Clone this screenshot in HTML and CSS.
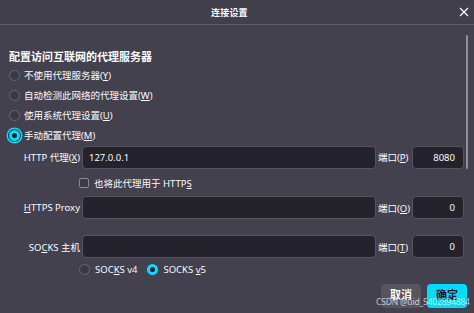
FILE: index.html
```html
<!DOCTYPE html>
<html lang="zh-CN">
<head>
<meta charset="utf-8">
<title>连接设置</title>
<link rel="stylesheet" href="styles.css">
</head>
<body>
<div class="dialog">
  <header class="titlebar">
    <span class="title">连接设置</span>
    <svg class="close" width="10" height="10" viewBox="0 0 10 10" aria-hidden="true">
      <path d="M1 1 L9 9 M9 1 L1 9" stroke="#fbfbfe" stroke-width="1.2" fill="none"/>
    </svg>
  </header>
  <main class="content">
    <h1 class="heading">配置访问互联网的代理服务器</h1>
    <div class="radio-list">
      <div class="option"><span class="radio"></span><span>不使用代理服务器(<u>Y</u>)</span></div>
      <div class="option"><span class="radio"></span><span>自动检测此网络的代理设置(<u>W</u>)</span></div>
      <div class="option"><span class="radio"></span><span>使用系统代理设置(<u>U</u>)</span></div>
      <div class="option"><span class="radio checked focused"></span><span>手动配置代理(<u>M</u>)</span></div>
    </div>
    <div class="proxy-grid">
      <span class="lbl">HTTP 代理(<u>X</u>)</span>
      <div class="field">127.0.0.1</div>
      <span class="plbl">端口(<u>P</u>)</span>
      <div class="field port">8080</div>

      <div class="sub-row"><span class="checkbox"></span><span>也将此代理用于 HTTP<u>S</u></span></div>

      <span class="lbl"><u>H</u>TTPS Proxy</span>
      <div class="field"></div>
      <span class="plbl">端口(<u>O</u>)</span>
      <div class="field port">0</div>

      <div class="spacer"></div>

      <span class="lbl">SO<u>C</u>KS 主机</span>
      <div class="field"></div>
      <span class="plbl">端口(<u>T</u>)</span>
      <div class="field port">0</div>

      <div class="sub-row">
        <span class="radio"></span><span>SOC<u>K</u>S v4</span>
        <span class="radio checked second"></span><span>SOCKS <u>v</u>5</span>
      </div>
    </div>
    <div class="buttons">
      <button class="btn cancel">取消</button>
      <button class="btn primary">确定</button>
    </div>
  </main>
  <div class="scrollbar"></div>
  <div class="watermark">CSDN @uid_5402894884</div>
</div>
</body>
</html>
```

FILE: styles.css
```css
html, body {
  margin: 0;
  padding: 0;
}

body {
  width: 474px;
  height: 313px;
  overflow: hidden;
  background: #42414d;
  color: #fbfbfe;
  font-family: "Noto Sans", "Noto Sans CJK SC", sans-serif;
  font-size: 9.5px;
}

u {
  text-decoration: underline;
  text-underline-offset: 1px;
  text-decoration-thickness: 1px;
}

.dialog {
  position: relative;
  height: 313px;
}

.titlebar {
  height: 24px;
  border-bottom: 1px solid #5d5c68;
  display: flex;
  align-items: center;
  padding-left: 211px;
  padding-right: 5px;
  background: #403f4b;
}

.title {
  font-size: 9px;
  font-weight: 700;
  letter-spacing: 0.2px;
}

.close {
  margin-left: auto;
}

.content {
  padding-top: 23px;
}

.heading {
  margin: 0 0 0 9px;
  height: 17px;
  line-height: 17px;
  font-size: 11px;
  font-weight: 700;
}

.option {
  display: flex;
  align-items: center;
  height: 20px;
  padding-left: 9px;
  gap: 4px;
}

.radio {
  flex: none;
  width: 11px;
  height: 11px;
  box-sizing: border-box;
  border-radius: 50%;
  border: 1px solid #686773;
  background: #3a3944;
}

.radio.checked {
  border: 3px solid #00ddff;
  background: #1c1b22;
}

.radio.focused {
  box-shadow: 0 0 0 1px #2b2a33, 0 0 0 2.5px #00ddff;
}

.proxy-grid {
  display: grid;
  grid-template-columns: 80px 294px 32px 52px;
  grid-template-rows: 24px 27px 23px 16px 23px 22px;
  column-gap: 2px;
  align-items: center;
}

.lbl {
  justify-self: end;
  white-space: nowrap;
}

.plbl {
  white-space: nowrap;
}

.field {
  height: 23px;
  box-sizing: border-box;
  border: 1px solid #56555f;
  border-radius: 4px;
  background: #24232b;
  padding: 0 6px;
  display: flex;
  align-items: center;
  font-size: 9.5px;
}

.field.port {
  justify-content: flex-end;
  padding-right: 8px;
}

.sub-row {
  grid-column: 2 / 5;
  margin-left: -3px;
  display: flex;
  align-items: center;
  gap: 5px;
}

.spacer {
  grid-column: 1 / -1;
}

.checkbox {
  width: 10px;
  height: 10px;
  box-sizing: border-box;
  border: 1px solid #8a8995;
  border-radius: 2px;
  background: #3a3944;
}

.radio.second {
  margin-left: 5px;
}

.buttons {
  display: flex;
  justify-content: flex-end;
  gap: 6px;
  padding-right: 7px;
  margin-top: 4px;
}

.btn {
  width: 40px;
  height: 24px;
  border: none;
  border-radius: 4px;
  font-family: "Noto Sans CJK SC", sans-serif;
  font-size: 11px;
  font-weight: 700;
  padding: 0 0 4px;
}

.btn.cancel {
  background: #55545f;
  color: #fbfbfe;
}

.btn.primary {
  background: #00ddff;
  color: #15141a;
}

.scrollbar {
  position: absolute;
  left: 466px;
  top: 35px;
  width: 2px;
  height: 134px;
  border-radius: 1px;
  background: #8f8f9d;
}

.watermark {
  position: absolute;
  left: 376px;
  top: 296px;
  font-size: 8.5px;
  color: rgba(255, 255, 255, 0.7);
  white-space: nowrap;
  letter-spacing: -0.2px;
}
```
